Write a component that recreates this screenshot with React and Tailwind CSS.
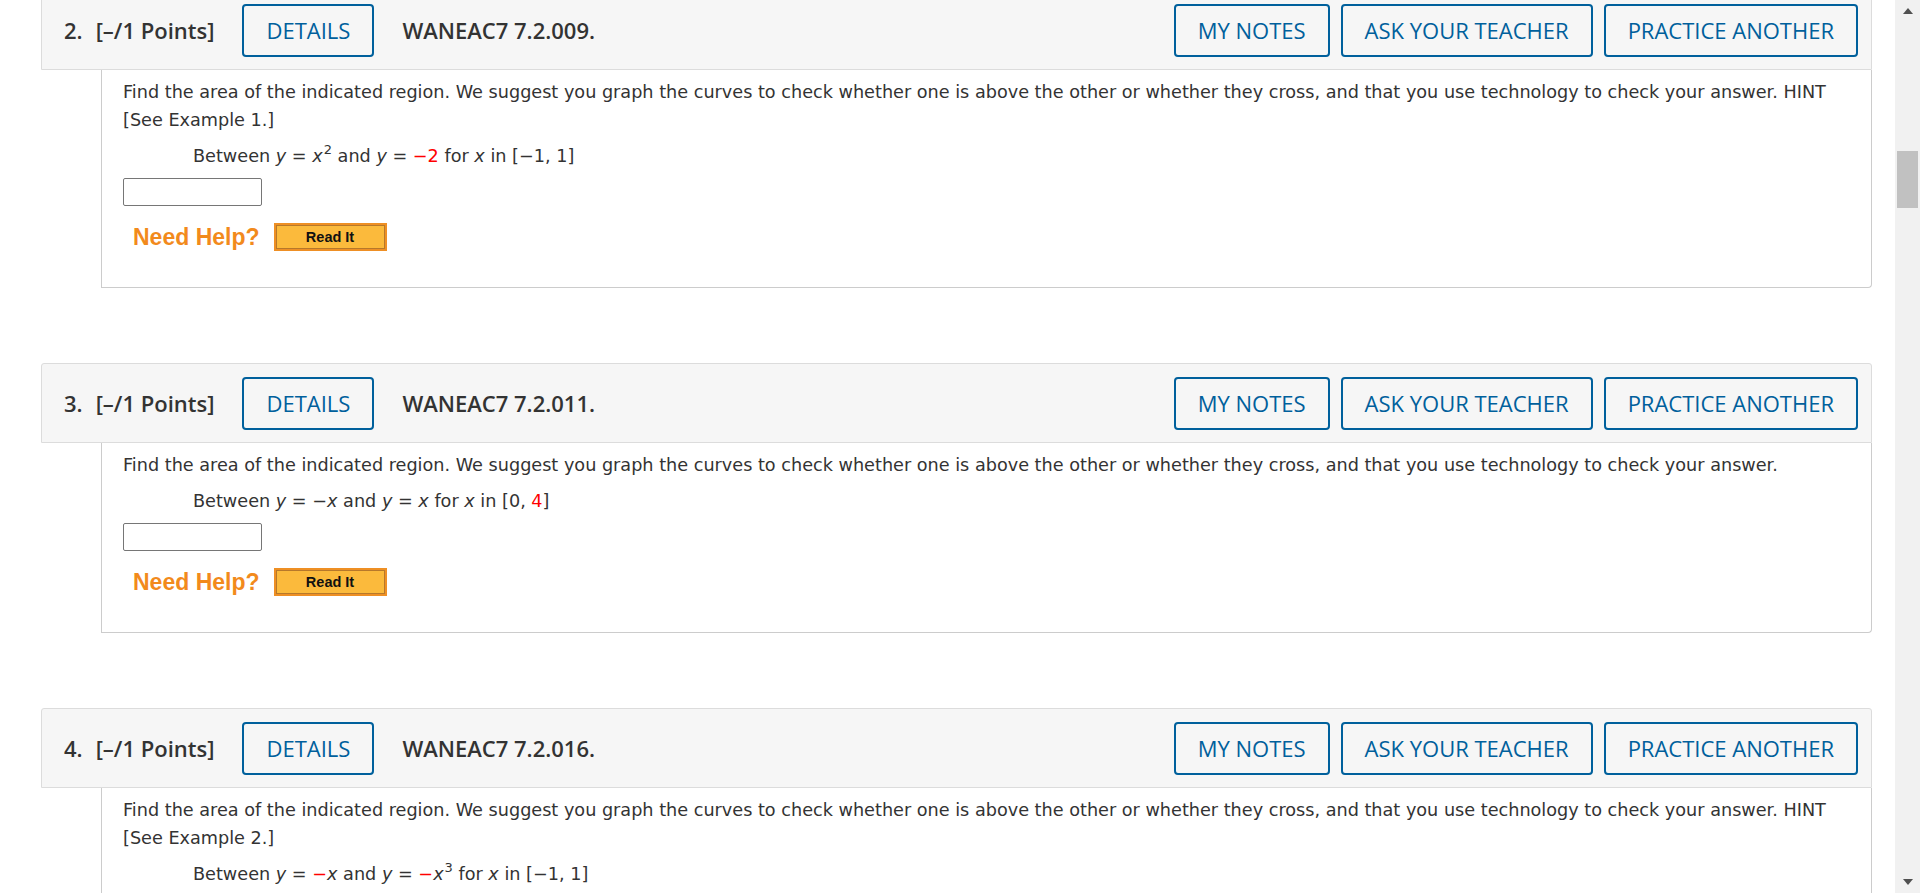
const V = ({ children }) => <i className="italic">{children}</i>;
const R = ({ children }) => <span className="text-[#ff0000]">{children}</span>;
const Sup = ({ children }) => <sup className="text-[13px] relative -top-[8px] ml-[1px]">{children}</sup>;

const questions = [
  {
    num: 2,
    code: 'WANEAC7 7.2.009.',
    hint: '[See Example 1.]',
    expr: (
      <>
        Between <V>y</V> = <V>x</V><Sup>2</Sup> and <V>y</V> = <R>−2</R> for <V>x</V> in [−1, 1]
      </>
    ),
  },
  {
    num: 3,
    code: 'WANEAC7 7.2.011.',
    hint: null,
    expr: (
      <>
        Between <V>y</V> = −<V>x</V> and <V>y</V> = <V>x</V> for <V>x</V> in [0, <R>4</R>]
      </>
    ),
  },
  {
    num: 4,
    code: 'WANEAC7 7.2.016.',
    hint: '[See Example 2.]',
    expr: (
      <>
        Between <V>y</V> = <R>−</R><V>x</V> and <V>y</V> = <R>−</R><V>x</V><Sup>3</Sup> for <V>x</V> in [−1, 1]
      </>
    ),
  },
];

function HeaderButton({ children, className = '' }) {
  return (
    <button
      className={`h-[53px] px-[22px] border-2 border-[#00609c] rounded-[4px] bg-[#f6f6f6] text-[#00609c] text-[22px] font-['Open_Sans',sans-serif] leading-none ${className}`}
    >
      {children}
    </button>
  );
}

function Question({ q }) {
  return (
    <section className="mb-[75px]">
      {/* grey title bar */}
      <div className="h-[80px] flex items-center pl-[22px] pr-[13px] bg-[#f6f6f6] border border-[#dcdcdc] rounded-t-[3px] font-['Open_Sans',sans-serif] text-[#333333]">
        <span className="text-[22px] font-semibold mr-[13px]">{q.num}.</span>
        <span className="text-[22px] font-semibold">[–/1 Points]</span>
        <HeaderButton className="ml-[28px]">DETAILS</HeaderButton>
        <span className="ml-[28px] text-[22px] font-semibold">{q.code}</span>
        <div className="flex-1" />
        <div className="flex gap-[11px]">
          <HeaderButton>MY NOTES</HeaderButton>
          <HeaderButton>ASK YOUR TEACHER</HeaderButton>
          <HeaderButton>PRACTICE ANOTHER</HeaderButton>
        </div>
      </div>

      {/* question body */}
      <div className="ml-[60px] border-x border-b border-[#cccccc] rounded-br-[4px] pl-[21px] pt-[8px] pb-[36px] font-['DejaVu_Sans',Verdana,sans-serif] text-[17.65px] leading-[28px] text-[#333333]">
        <p className="whitespace-nowrap">
          Find the area of the indicated region. We suggest you graph the curves to check whether one is above the other or
          whether they cross, and that you use technology to check your answer.{q.hint && ' HINT'}
          {q.hint && (
            <>
              <br />
              {q.hint}
            </>
          )}
        </p>
        <p className="mt-[8px] pl-[70px] whitespace-nowrap">{q.expr}</p>
        <input
          type="text"
          className="block mt-[8px] w-[139px] h-[28px] border border-[#767676] rounded-[2px] bg-white"
        />
        <div className="mt-[17px] ml-[10px] flex items-center">
          <span className="font-['Liberation_Sans',Arial,sans-serif] font-bold text-[23px] leading-none text-[#f28a1c]">
            Need Help?
          </span>
          <button className="ml-[14px] w-[113px] h-[28px] border-2 border-[#ee8f24] bg-[#ee8f24] p-0">
            <span className="flex items-center justify-center w-full h-full border border-[#b7782a] bg-[#fbba3c] font-['Liberation_Sans',Arial,sans-serif] font-bold text-[14.5px] text-[#111111]">
              Read It
            </span>
          </button>
        </div>
      </div>
    </section>
  );
}

function Scrollbar() {
  return (
    <div className="w-[25px] h-[893px] bg-[#f1f1f1] flex flex-col items-center shrink-0">
      <svg width="12" height="20" viewBox="0 0 12 20" className="mt-[1px]">
        <path d="M1 13 L6 7 L11 13 Z" fill="#505050" />
      </svg>
      <div className="mt-[130px] w-[21px] h-[57px] bg-[#c1c1c1]" />
      <div className="flex-1" />
      <svg width="12" height="20" viewBox="0 0 12 20" className="mb-[1px]">
        <path d="M1 7 L6 13 L11 7 Z" fill="#505050" />
      </svg>
    </div>
  );
}

export default function App() {
  return (
    <div className="w-[1920px] h-[893px] overflow-hidden bg-white flex">
      <main className="flex-1 pl-[41px] pr-[23px] -mt-[10px]">
        {questions.map((q) => (
          <Question key={q.num} q={q} />
        ))}
      </main>
      <Scrollbar />
    </div>
  );
}
